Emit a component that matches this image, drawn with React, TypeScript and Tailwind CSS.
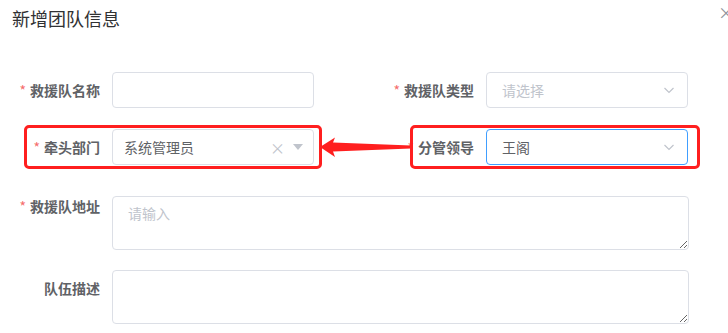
import React from "react";

const FONT = { fontFamily: '"Noto Sans CJK SC", "Noto Sans", sans-serif' };

function Label({ text, required, className = "" }: { text: string; required?: boolean; className?: string }) {
  return (
    <div className={`w-[112px] shrink-0 pr-3 text-right text-[14px] font-bold text-[#606266] ${className}`}>
      {required && <span className="mr-1 text-[#f56c6c] font-normal">*</span>}
      {text}
    </div>
  );
}

function Chevron() {
  return (
    <svg width="12" height="12" viewBox="0 0 12 12" fill="none">
      <path d="M1.5 4 L6 8.5 L10.5 4" stroke="#c0c4cc" strokeWidth="1.2" />
    </svg>
  );
}

export default function App() {
  return (
    <div className="relative h-[333px] w-[728px] overflow-hidden bg-white" style={FONT}>
      {/* header */}
      <div className="flex items-start justify-between">
        <div className="pl-3 pt-[6px] text-[18px] leading-[24px] text-[#303133]">新增团队信息</div>
        <div className="mr-[-6px] pt-[2px] text-[16px] leading-[20px] text-[#909399]">×</div>
      </div>

      <div className="mt-[42px]">
        {/* row 1 */}
        <div className="flex">
          <div className="flex items-center">
            <Label text="救援队名称" required />
            <input className="h-[36px] w-[202px] rounded-[4px] border border-[#dcdfe6] px-3 text-[14px] outline-none" />
          </div>
          <div className="ml-[60px] flex items-center">
            <Label text="救援队类型" required />
            <div className="flex h-[36px] w-[202px] items-center justify-between rounded-[4px] border border-[#dcdfe6] pl-[15px] pr-[12px]">
              <span className="text-[14px] text-[#c0c4cc]">请选择</span>
              <Chevron />
            </div>
          </div>
        </div>

        {/* row 2 */}
        <div className="mt-[21px] flex">
          <div className="flex items-center">
            <Label text="牵头部门" required />
            <div className="flex h-[36px] w-[202px] items-center justify-between rounded-[4px] border border-[#dcdfe6] pl-[11px] pr-[10px]">
              <span className="text-[14px] text-[#606266]">系统管理员</span>
              <span className="flex items-center gap-[8px]">
                <span className="text-[15px] leading-none text-[#c0c4cc]">×</span>
                <svg width="10" height="6" viewBox="0 0 10 6">
                  <path d="M0 0 H10 L5 6 Z" fill="#c0c4cc" />
                </svg>
              </span>
            </div>
          </div>
          <div className="ml-[60px] flex items-center">
            <Label text="分管领导" required />
            <div className="flex h-[36px] w-[202px] items-center justify-between rounded-[4px] border border-[#409eff] pl-[15px] pr-[12px]">
              <span className="text-[14px] text-[#606266]">王阁</span>
              <Chevron />
            </div>
          </div>
        </div>

        {/* row 3 */}
        <div className="mt-[31px] flex items-start">
          <Label text="救援队地址" required className="pt-[1px] leading-[18px]" />
          <textarea
            placeholder="请输入"
            className="h-[54px] w-[577px] rounded-[4px] border border-[#dcdfe6] px-[15px] pt-[6px] text-[14px] leading-[20px] text-[#606266] outline-none placeholder:text-[#c0c4cc]"
          />
        </div>

        {/* row 4 */}
        <div className="mt-[20px] flex items-start">
          <Label text="队伍描述" className="pt-[9px] leading-[18px]" />
          <textarea className="h-[54px] w-[577px] rounded-[4px] border border-[#dcdfe6] px-[15px] pt-[6px] text-[14px] outline-none" />
        </div>
      </div>

      {/* annotation overlay */}
      <div className="pointer-events-none absolute left-[24px] top-[125px] h-[44px] w-[298px] rounded-[5px] border-[3px] border-[#ff1f1f]" />
      <div className="pointer-events-none absolute left-[410px] top-[125px] h-[44px] w-[290px] rounded-[5px] border-[3px] border-[#ff1f1f]" />
      <svg className="pointer-events-none absolute left-0 top-0" width="728" height="333">
        <path d="M320 147 L335 137.5 L333 142.5 L411 145.5 L411 148.5 L333 151.5 L335 157 Z" fill="#ff1f1f" />
      </svg>
    </div>
  );
}
